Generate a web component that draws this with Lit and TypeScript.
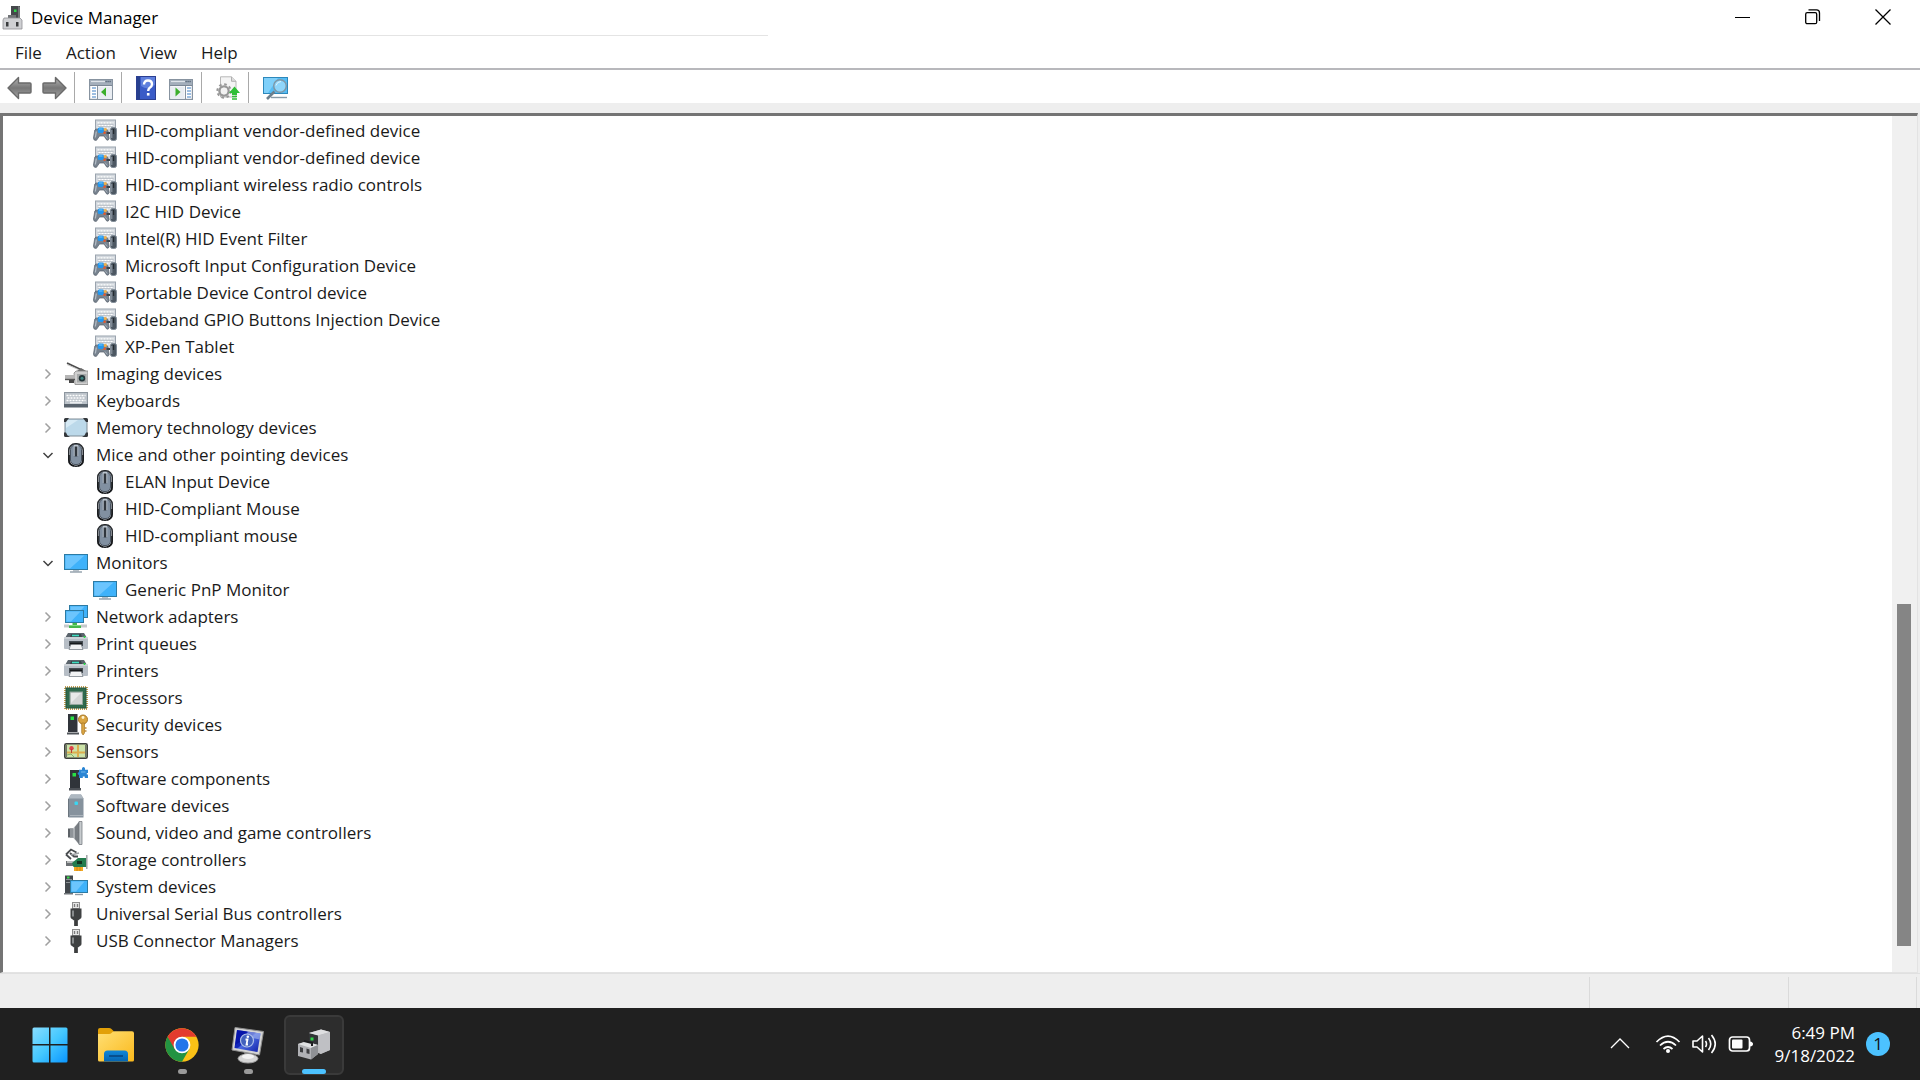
import { LitElement, html, css, svg, type TemplateResult, type SVGTemplateResult } from "lit";
import { customElement } from "lit/decorators.js";
import { classMap } from "lit/directives/class-map.js";

const icon = (body: SVGTemplateResult, size = 24): TemplateResult =>
  html`<svg class="icon" width=${size} height=${size} viewBox="0 0 24 24" aria-hidden="true">${body}</svg>`;

const screenShape = (x: number, y: number, w: number, h: number) => svg`
  <rect x=${x + 0.5} y=${y + 0.5} width=${w - 1} height=${h - 1} fill="#3fb2fa" stroke="#2c7aa3"/>
  <path d=${`M${x + 1.5} ${y + 1.5}h${w - 5}L${x + 6} ${y + h - 1.5}H${x + 1.5}z`} fill="#7ccbfd" opacity=".75"/>`;

const ICONS: Record<string, SVGTemplateResult> = {
  hid: svg`
    <rect x="2.5" y="1" width="20" height="13" fill="#d3d8de" stroke="#9aa3ad"/>
    <path d="M4.500 4h16M5.500 6.500h15M4.500 9h16" stroke="#fff" stroke-width="1.500" stroke-dasharray="2 1"/>
    <path d="M4.500 5.200h16M5 7.800h15" stroke="#a3acb6" stroke-width=".7"/>
    <path d="M1.800 11Q3 9.500 5 10h7q2.500 0 3 2l1.200 7.500q-.8 2.500-2.500 1.500L11 17H6.500L3.500 21.300Q1 22 .4 19.500z" fill="#78838f" stroke="#56606b" stroke-width=".7"/>
    <path d="M2.300 18.500l1-6" stroke="#b4bdc6" stroke-width="1.300"/><path d="M12 16.500l2.300 3" stroke="#a4adb7"/>
    <rect x="4.800" y="8.500" width="6" height="5.500" rx="1.500" fill="#2497ee"/><path d="M6 10h3.500" stroke="#74c6fa"/>
    <circle cx="12.300" cy="10.500" r="1.600" fill="#f0b04a"/><circle cx="11.600" cy="13.800" r="1.300" fill="#e2572c"/>
    <path d="M13.500 14h4.500" stroke="#3c444c" stroke-width="2"/>
    <rect x="17.500" y="8.500" width="6" height="13" rx="2" fill="#4d5863" stroke="#818c97"/>
    <path d="M20.500 10v5" stroke="#23292e" stroke-width="1.400"/><path d="M18.800 11v8" stroke="#a9b3bc" stroke-width=".8"/>`,
  imaging: svg`
    <path d="M3 1l18 8.500" stroke="#4b4b4b" stroke-width="1.800"/><path d="M3 2.500L20 10" stroke="#b8b8b8" stroke-width=".8"/>
    <path d="M13 9l4-3 5 3z" fill="#6c6c6c"/>
    <path d="M10 11l2-2h12v13.500H11z" fill="#cfcfcf" stroke="#858585" stroke-width=".8"/>
    <rect x="1" y="13" width="10" height="4.500" fill="#b6b6b6"/><path d="M1 17.500h10" stroke="#555" stroke-width="1.400"/>
    <rect x="5" y="18" width="5" height="3" fill="#484848"/>
    <rect x="13" y="12" width="9.500" height="8.500" fill="#a5a8a8"/><circle cx="18" cy="16.300" r="3.200" fill="#24363a"/><circle cx="18" cy="16.300" r="1.500" fill="#3f8580"/>`,
  keyboard: svg`
    <rect x=".5" y="3.500" width="23" height="14" fill="#bcc3ca" stroke="#8d969f"/>
    <path d="M2.500 6.500h19M3.500 9h18M2.500 11.500h19" stroke="#fff" stroke-width="1.600" stroke-dasharray="2 1"/>
    <path d="M6 13.800h12" stroke="#fff"/>
    <rect y="15" width="24" height="3.500" fill="#59636d"/>`,
  memory: svg`
    <rect x="1" y="3" width="22" height="17" rx="1.500" fill="#bcd9ea" stroke="#7e8c96"/>
    <path d="M2 12V4h12z" fill="#d6eaf5"/>
    <path d="M0 6V3.500Q0 2 1.500 2H5L3.500 4 2 6zM24 6V3.500Q24 2 22.500 2H19l1.500 2L22 6zM0 16.500V19.500Q0 21 1.500 21H6l-2.500-1.500L2 16.500zM24 16.500V19.500q0 1.500-1.500 1.500H18l2.500-1.500 1.500-3z" fill="#33373b"/>`,
  mouse: svg`
    <rect x="4.700" y=".8" width="14.600" height="22.400" rx="6.500" fill="#c6ccd3" stroke="#26292d" stroke-width="1.400"/>
    <rect x="6.500" y="2" width="11" height="19.500" rx="4.500" fill="#8190a1" stroke="#49535f"/>
    <path d="M12 2v11" stroke="#bdc7d1" stroke-width="4.500"/><path d="M12 3.500v10" stroke="#30363d" stroke-width="2.600"/>
    <path d="M5 12v5q0 5 5 6M19 12v5q0 5-5 6" fill="none" stroke="#17191c" stroke-width="1.600"/>`,
  monitor: svg`${screenShape(0, 3, 24, 16)}<path d="M9 19h6v1.500H9z" fill="#b9c2c9"/><path d="M6 21h12" stroke="#8796a3" stroke-width="1.300"/>`,
  network: svg`${screenShape(5, 0, 19, 13)}${screenShape(1, 5, 19, 13)}
    <path d="M8.500 18h4.500v2h4v3H5v-3h3.500z" fill="#46b84b"/><path d="M0 21h5M17 21h6" stroke="#c6c9cb" stroke-width="3"/><path d="M5 20.500h12" stroke="#83d986"/>`,
  printer: svg`
    <path d="M4 1h16l3 5H1z" fill="#5b646c"/><path d="M7 2h10l1 3H6z" fill="#3b454b"/><path d="M8 3.500h7" stroke="#3ddcc0" stroke-width="1.600"/>
    <rect y="5" width="24" height="12" rx="1" fill="#b7bec6"/><path d="M0 6h24" stroke="#e2e5e8"/><circle cx="20.500" cy="5" r="1" fill="#21e03e"/>
    <path d="M5 9h14v5H5z" fill="#454c52"/><path d="M7 12h10l2 5.500H5z" fill="#f2f3f4" stroke="#7c848b" stroke-width=".8"/><path d="M6 11.500h12" stroke="#16191b" stroke-width="1.800"/>`,
  processor: svg`
    <rect x="1" y="1" width="22" height="22" fill="none" stroke="#c49c50" stroke-width="2" stroke-dasharray="1 1"/>
    <rect x="2" y="2" width="20" height="20" fill="#2f6a4d" stroke="#245740"/>
    <rect x="6" y="6" width="12.500" height="12.500" fill="#d3d5d5" stroke="#92a49b"/><path d="M7 7h10L7 17z" fill="#e8e9e9"/>`,
  security: svg`
    <path d="M4 1h9.500v18H4z" fill="#30343a"/><path d="M3 19.500h12v2H3z" fill="#50545a"/><rect x="6.500" y="3.500" width="3.500" height="3.500" fill="#28e044"/>
    <circle cx="19" cy="6.500" r="4.500" fill="#d9a441" stroke="#a67625"/><circle cx="19" cy="4.500" r="1.400" fill="#fff3d0"/>
    <path d="M17.700 10h2.800v10l-1.400 2-1.400-2z" fill="#d9a441" stroke="#a67625" stroke-width=".7"/><path d="M20.500 15h2M20.500 18h2" stroke="#bd8a33" stroke-width="1.500"/>`,
  sensor: svg`
    <rect x=".8" y="3.800" width="22.400" height="14.400" rx="1.500" fill="#cce3a8" stroke="#3d3e3c" stroke-width="1.600"/>
    <path d="M3 12.500h18M14 5v12" stroke="#dbae4d" stroke-width="2"/><path d="M3 15l4-1 3 3" stroke="#83ae68" fill="none"/>
    <circle cx="7.500" cy="8.300" r="2.200" fill="#e0454b"/><path d="M7.500 9v4" stroke="#b93d37"/><path d="M2.500 5v12M21.500 5v12" stroke="#70756a"/>`,
  component: svg`
    <path d="M6 3h10v18H6z" fill="#30343a"/><path d="M5 21h12v2.500H5z" fill="#4c5056"/><rect x="8.500" y="6" width="3.500" height="3.500" fill="#28e044"/>
    <path d="M15 2.800h3V1.200q1.500-2.400 3 0v1.600h3V6h-1.200v1.500H24V11h-3.200V9.500h-2V11H15V8q-2.800-1.500 0-3z" fill="#2a85d4"/><path d="M17 5h4.500" stroke="#72b8ec"/>`,
  software: svg`
    <path d="M7 .5h10L19.500 4.500V23.500H4.500V4.500z" fill="#86929d"/><path d="M7 .5h10l2.500 4h-15z" fill="#aeb8c1"/><path d="M4.500 5v18" stroke="#6b757e"/>
    <rect x="10.500" y="7.500" width="3.500" height="3.500" rx="1" fill="#3bd6f2"/><path d="M6 21.500h13" stroke="#aab3bb"/>`,
  sound: svg`
    <path d="M4 7.500h5v9H4z" fill="#5d6267"/><path d="M6 7.500h3v9H6z" fill="#8f9499"/>
    <path d="M9 7.500L15 .8v22.400L9 16.500z" fill="#a9adb1"/><path d="M11 6L15 1v22l-4-5z" fill="#787d82"/><path d="M15 .5h3v23h-3z" fill="#c7cbce" stroke="#6b7075" stroke-width=".7"/>`,
  storage: svg`
    <path d="M2 6.500L7 1.500l5.500 3M2 6.500l5 4.500M6 5l4 3.500h4" fill="none" stroke="#4a4d50" stroke-width="1.800"/><path d="M7 7l8-2" stroke="#9da1a4" stroke-width="1.500"/>
    <path d="M2 13h9l3 5H2z" fill="#6b6f72"/><path d="M3 14h8" stroke="#d2d4d5" stroke-width="1.500"/>
    <path d="M8 15l6-5h8.500v9H9.500z" fill="#237c4e"/><path d="M13 14.500h5" stroke="#12331f" stroke-width="3"/><path d="M22.800 7v14" stroke="#a2a5a7" stroke-width="1.500"/>
    <rect x="10" y="19" width="9" height="4" fill="#f1a922"/><path d="M13 19v4M16 19v4" stroke="#d17a12" stroke-width=".8"/>`,
  system: svg`
    <path d="M1 .5h8V18H1z" fill="#42474c"/><path d="M0 18h9v1.500H0z" fill="#707579"/><path d="M2 4.500h6M2 7.500h6" stroke="#8c9195"/><rect x="3" y="1.500" width="2.500" height="2" fill="#38dc4c"/>
    ${screenShape(6, 5, 18, 13)}<path d="M11 19.500h8" stroke="#8e9aa3" stroke-width="1.400"/>`,
  usb: svg`
    <rect x="8.500" y=".5" width="7" height="6" fill="#e6e6e6" stroke="#8f8f8f"/><path d="M10.500 2v3M13.500 2v3" stroke="#7c7c7c" stroke-width="1.300"/>
    <path d="M6.500 6.500h11v8.500q0 1.500-1.500 2l-2 1.500h-4l-2-1.500q-1.500-.5-1.500-2z" fill="#3f4142"/><path d="M9 8.500v6" stroke="#888b8d" stroke-width="2"/>
    <path d="M10 18h4v6h-4z" fill="#545657"/><path d="M12 18v6" stroke="#242525"/>`,
};

interface Node { label: string; icon: string; children?: Node[]; }

const child = (iconName: string, ...labels: string[]): Node[] => labels.map((label) => ({ label, icon: iconName }));

const HID_DEVICES = child("hid",
  "HID-compliant vendor-defined device", "HID-compliant vendor-defined device", "HID-compliant wireless radio controls",
  "I2C HID Device", "Intel(R) HID Event Filter", "Microsoft Input Configuration Device",
  "Portable Device Control device", "Sideband GPIO Buttons Injection Device", "XP-Pen Tablet");

const CATEGORIES: Node[] = [
  { label: "Imaging devices", icon: "imaging" },
  { label: "Keyboards", icon: "keyboard" },
  { label: "Memory technology devices", icon: "memory" },
  { label: "Mice and other pointing devices", icon: "mouse", children: child("mouse", "ELAN Input Device", "HID-Compliant Mouse", "HID-compliant mouse") },
  { label: "Monitors", icon: "monitor", children: child("monitor", "Generic PnP Monitor") },
  { label: "Network adapters", icon: "network" },
  { label: "Print queues", icon: "printer" },
  { label: "Printers", icon: "printer" },
  { label: "Processors", icon: "processor" },
  { label: "Security devices", icon: "security" },
  { label: "Sensors", icon: "sensor" },
  { label: "Software components", icon: "component" },
  { label: "Software devices", icon: "software" },
  { label: "Sound, video and game controllers", icon: "sound" },
  { label: "Storage controllers", icon: "storage" },
  { label: "System devices", icon: "system" },
  { label: "Universal Serial Bus controllers", icon: "usb" },
  { label: "USB Connector Managers", icon: "usb" },
];

const chevron = (open: boolean) => html`<svg class="chevron" width="12" height="12" viewBox="0 0 12 12" aria-hidden="true">
  <path d=${open ? "M1.500 4L6 8.500 10.500 4" : "M3.500 1.500L8 6 3.500 10.500"} fill="none" stroke=${open ? "#404040" : "#a0a0a0"} stroke-width="1.500"/></svg>`;

const arrow = (left: boolean) => html`<svg width="26" height="24" viewBox="0 0 26 24" aria-hidden="true">
  <defs><linearGradient id="g" x2="0" y2="1"><stop stop-color="#b4b4b4"/><stop offset=".5" stop-color="#777"/><stop offset="1" stop-color="#a5a5a5"/></linearGradient></defs>
  <path d=${left ? "M1 12L11.500 1.500V7H23q1 0 1 1v8q0 1-1 1H11.500v5.500z" : "M24 12L13.500 1.500V7H2q-1 0-1 1v8q0 1 1 1h11.500v5.500z"} fill="url(#g)" stroke="#6a6a6a" stroke-width="1.400" stroke-linejoin="round"/></svg>`;

const pane = (left: boolean) => svg`
  <rect x=".6" y="3.600" width="22.800" height="19.800" fill="#fff" stroke="#8793a0" stroke-width="1.200"/>
  <rect x="1" y="4" width="22" height="5" fill="#a3aebb"/><path d="M2 5.500h14" stroke="#dfe4ea" stroke-width="1.200"/><path d="M16.500 5.500h5.500" stroke="#4d5c6e" stroke-width="1.400" stroke-dasharray="1.200 .8"/>
  <path d="M1 9.500h22" stroke="#7c8896"/>
  ${left
    ? svg`<path d="M3 12h4M3 15h4M3 18h4M3 21h4" stroke="#3d7fc4" stroke-width="1.200"/><path d="M8.500 10v13" stroke="#8793a0"/><rect x="9" y="10.500" width="14" height="12.500" fill="#e9edf2"/><path d="M17 11.500v9l-5-4.500z" fill="#3bae2c"/>`
    : svg`<path d="M18 12h4M18 15h4M18 18h4M18 21h4" stroke="#3d7fc4" stroke-width="1.200"/><path d="M16.500 10v13" stroke="#8793a0"/><rect x="1.500" y="10.500" width="14" height="12.500" fill="#e9edf2"/><path d="M6.500 11.500v9l5-4.500z" fill="#3bae2c"/>`}`;

const helpIcon = html`<svg width="20" height="24" viewBox="0 0 20 24" aria-hidden="true">
  <rect x=".5" y=".5" width="19" height="23" fill="#3a5bc7" stroke="#2b3f92"/><path d="M1 1h3v22H1z" fill="#27408f"/><path d="M5 1h14v8Q12 15 5 10z" fill="#5f80dd"/>
  <path d="M8 8.500Q8 4.500 12 4.500t4 3.700Q16 10.500 13.500 12 12.200 13 12.200 15" fill="none" stroke="#fff" stroke-width="2.400"/><rect x="10.900" y="17" width="2.600" height="2.600" fill="#fff"/></svg>`;

const scanIcon = svg`
  <path d="M4.500.8h11l4.500 4.500V21H4.500z" fill="#f4f4f4" stroke="#b8b8b8"/><path d="M15.500.8v4.500H20" fill="#ddd" stroke="#b0b0b0"/>
  <circle cx="8" cy="15" r="4.600" fill="none" stroke="#979797" stroke-width="2.400"/><circle cx="8" cy="15" r="6.700" fill="none" stroke="#979797" stroke-width="2" stroke-dasharray="2.600 2.660"/><circle cx="8" cy="15" r="3.300" fill="#f2f2f2"/>
  <path d="M18.500 10.500l5.500 6.500h-3v2h-5v-2h-3z" fill="#2fbf36"/><path d="M16 20.500h5M16 23h5" stroke="#2fbf36" stroke-width="1.400"/>`;

const searchScreen = html`<svg width="26" height="24" viewBox="0 0 26 24" aria-hidden="true">
  <rect x=".5" y="1.500" width="24" height="16" fill="#56bdf5" stroke="#2d88bb"/><path d="M1 2h14L5 17H1z" fill="#7fd0fa"/>
  <path d="M8 21.500h16" stroke="#879aa7" stroke-width="1.400"/><path d="M4 23l7.500-7.500" stroke="#6e7f8c" stroke-width="2.600"/>
  <circle cx="17" cy="10" r="6.300" fill="#8fd5fa" stroke="#7e98a8" stroke-width="1.500"/><path d="M13 9.500q1-4 5-4" fill="none" stroke="#dff4ff"/></svg>`;

const appIcon = html`<svg width="22" height="26" viewBox="0 0 22 26" aria-hidden="true">
  <path d="M9 1h9v14H9z" fill="#45484b"/><path d="M16 1l2 1v13h-2z" fill="#737779"/><rect x="12" y="4.500" width="2.500" height="2.500" fill="#2ed64a"/>
  <path d="M6 10h8v4H6z" fill="#717477"/><path d="M2 13h16l2 2v9H1v-9z" fill="#cfd0d3" stroke="#8f9194" stroke-width=".8"/>
  <path d="M4 17h2.500v4.500H4zM14 17h2.500v4.500H14z" fill="#3b3c3e"/></svg>`;

const startLogo = html`<svg width="36" height="36" viewBox="0 0 36 36" aria-hidden="true">
  <defs><linearGradient id="win" gradientUnits="userSpaceOnUse" x1="0" y1="0" x2="36" y2="36"><stop stop-color="#8adeff"/><stop offset=".5" stop-color="#45c8ff"/><stop offset="1" stop-color="#0894ff"/></linearGradient></defs>
  <path d="M2 .5h15v16.500H.5V2q0-1.500 1.500-1.500zM18.500.5H34q1.500 0 1.500 1.500v15h-17zM.5 18.500H17v17H2Q.5 35.500.5 34zM18.500 18.500h17V34q0 1.500-1.500 1.500H18.500z" fill="url(#win)"/></svg>`;

const folderLogo = html`<svg width="38" height="36" viewBox="0 0 38 36" aria-hidden="true">
  <defs><linearGradient id="f" x2="1" y2="1"><stop stop-color="#ffdf74"/><stop offset="1" stop-color="#fbb91c"/></linearGradient><linearGradient id="b" x2="0" y2="1"><stop stop-color="#1187d8"/><stop offset="1" stop-color="#0565b2"/></linearGradient></defs>
  <path d="M1 3q0-2 2-2h9q1.500 0 2.500 1L17 4.500V10H1z" fill="#e2a008"/>
  <path d="M1 7h11q1.500 0 2.500-1l1-1q1-.8 2-.8H35q2 0 2 2V33q0 1.500-1.500 1.500H2.500Q1 34.500 1 33z" fill="url(#f)"/>
  <path d="M7 34.500V27q0-3.500 3.500-3.500h17Q31 23.500 31 27v7.500z" fill="url(#b)"/><path d="M12 29h14" stroke="#063f78" stroke-width="1.400"/></svg>`;

const chromeLogo = html`<svg width="34" height="34" viewBox="0 0 48 48" aria-hidden="true">
  <circle cx="24" cy="24" r="23.500" fill="#fbc116"/>
  <path d="M3.650 12.250A23.500 23.500 0 0 0 24 47.500L34.200 29.900 24 24H13.800z" fill="#229342"/>
  <path d="M3.650 12.250L13.800 29.900 24 24V12.250H44.350A23.500 23.500 0 0 0 3.650 12.250z" fill="#e33b2e"/>
  <circle cx="24" cy="24" r="11.800" fill="#fff"/><circle cx="24" cy="24" r="9.300" fill="#2476ea"/></svg>`;

const infoLogo = html`<svg width="34" height="38" viewBox="0 0 34 38" aria-hidden="true">
  <defs><linearGradient id="s" x2="1" y2="1"><stop stop-color="#0b1cc0"/><stop offset=".45" stop-color="#1226b8"/><stop offset=".5" stop-color="#4b6ae0"/><stop offset="1" stop-color="#0f1ea6"/></linearGradient></defs>
  <path d="M13 24l9 2-1 7h-7z" fill="#8c8c8c"/><ellipse cx="17" cy="32.500" rx="10" ry="4.500" fill="#d5d5d5" stroke="#9a9a9a"/><ellipse cx="17" cy="30.500" rx="6" ry="2.500" fill="#f2f2f2"/>
  <path d="M4 1.500l28.500 4L28.500 29 1 24z" fill="#d4d4d4" stroke="#8d8d8d"/>
  <path d="M6 4l23.500 3.400L26.500 26 3.500 22z" fill="url(#s)"/><path d="M17 5.500l12.500 1.900-1 6-14-3z" fill="#a9b9ee" opacity=".6"/><path d="M6 4l10 1.500L9 16l-5 3z" fill="#000c9c" opacity=".6"/>
  <circle cx="16" cy="14.500" r="6.500" fill="#4261bd" stroke="#aebfe8" stroke-width="1.200"/>
  <circle cx="16.800" cy="10.800" r="1.300" fill="#fff"/><path d="M14.500 13.500h2l-1 5h1.500" fill="none" stroke="#fff" stroke-width="1.800"/></svg>`;

const deviceLogo = html`<svg width="36" height="34" viewBox="0 0 36 34" aria-hidden="true">
  <path d="M13 5l12-3.500L34 4v18l-9 4-12-4z" fill="#b9babd"/><path d="M13 5l9 2v18l-9-4z" fill="#323437"/><path d="M13 5l12-3.500L34 4 22 7.500z" fill="#dedfe1"/>
  <path d="M22 7.500L34 4v18l-10 4z" fill="#bfc0c4"/><rect x="14.500" y="9.500" width="3" height="3" fill="#30d64a"/>
  <path d="M2 16l8-2.500L22 17v9l-7 5.500L2 28z" fill="#b0b1b5"/><path d="M2 16l8-2.500L22 17l-7 3z" fill="#dfe0e2"/><path d="M15 20l7-3v9l-7 5.500z" fill="#8f9195"/>
  <path d="M8 13l8 2v3" fill="none" stroke="#1b1c1e" stroke-width="2"/><path d="M4 19l3 1v4.500L4 24zM10.500 20.500l3 1V26l-3-.8z" fill="#3c3d40"/></svg>`;

@customElement("app-root")
export class AppRoot extends LitElement {
  static styles = css`
    :host { display: flex; flex-direction: column; min-height: 100vh; background: #fff; color: #1a1a1a; font: 17px/26px "Open Sans", "Noto Sans", sans-serif; }
    * { box-sizing: border-box; }
    button { border: 0; padding: 0; margin: 0; background: none; color: inherit; font: inherit; display: flex; align-items: center; justify-content: center; }
    svg { display: block; flex: none; }
    ul { list-style: none; margin: 0; padding: 0; }
    .titlebar { display: flex; height: 35px; align-items: center; justify-content: space-between; }
    .caption { display: flex; align-items: center; gap: 7px; padding-left: 2px; color: #000; }
    .caption h1 { font: inherit; margin: 0; padding-top: 1px; }
    .window-buttons { display: flex; height: 35px; padding: 0 2px 2px 0; }
    .window-buttons button { width: 70px; }
    .edge { width: 40%; height: 1px; background: #e4e4e4; }
    .menubar { display: flex; height: 32px; align-items: center; padding: 2px 0 0 15px; gap: 24px; }
    .toolbar { display: flex; height: 35px; align-items: flex-end; border-top: 2px solid #b8b8bc; padding-left: 7px; }
    .group { display: flex; height: 31px; align-items: center; gap: 13px; padding: 0 8px 0 14px; border-left: 1px solid #a9a9a9; }
    .group:first-child { border: 0; padding: 0 6px 0 0; gap: 9px; }
    .content { flex: 1; display: flex; flex-direction: column; background: #eee; padding: 10px 2px 0 0; }
    .view { flex: 1; display: flex; border: solid #e3e3e3; border-width: 3px 1px 1px 3px; border-top-color: #747474; border-left-color: #747474; background: #fff; }
    .tree { flex: 1; padding-top: 1px; }
    .item { display: flex; height: 27px; align-items: center; padding-left: 39px; gap: 5px; white-space: nowrap; }
    .item .icon { margin-left: 5px; }
    .item.leaf { padding-left: 85px; }
    .twisty { width: 12px; height: 27px; }
    .item .icon + span { margin-left: 3px; }
    .scrollbar { width: 25px; background: #f0f0f0; padding: 488px 6px 26px 5px; display: flex; }
    .thumb { flex: 1; background: #858585; }
    .status { display: flex; height: 35px; background: #eee; border-top: 1px solid #e0e0e0; padding-top: 3px; }
    .status span { border-right: 1px solid #dadada; }
    .status .main { flex: 1; } .status .mid { width: 199px; } .status .end { width: 128px; margin-right: 3px; }
    .taskbar { display: flex; height: 72px; align-items: center; justify-content: space-between; background: #202020; color: #fff; padding: 0 30px 0 20px; }
    .apps { display: flex; gap: 6px; margin-top: 2px; }
    .apps button { position: relative; width: 60px; height: 60px; border-radius: 6px; }
    .apps .active { background: #2d2d2d; border: 2px solid #3a3a3a; }
    .mark { position: absolute; bottom: 1px; width: 9px; height: 5px; border-radius: 3px; background: #9a9a9a; }
    .active .mark { width: 24px; background: #4cc2ff; bottom: -1px; }
    .tray { display: flex; align-items: center; }
    .tray .up { margin-right: 25px; }
    .tray .quick { gap: 11px; margin-right: 21px; }
    .clock { display: block; text-align: right; line-height: 23px; margin-right: 11px; }
    .clock time { display: block; }
    .badge { width: 24px; height: 24px; border-radius: 50%; background: #4cc2ff; color: #111; line-height: 24px; }
  `;

  private row(node: Node, leaf: boolean): TemplateResult {
    const open = !!node.children;
    return html`<li role="treeitem" aria-label=${node.label}>
      <div class=${classMap({ item: true, leaf })}>
        ${leaf ? "" : html`<button class="twisty" aria-label=${`${open ? "Collapse" : "Expand"} ${node.label}`}>${chevron(open)}</button>`}
        ${icon(ICONS[node.icon])}<span>${node.label}</span>
      </div>
      ${open ? html`<ul role="group">${node.children!.map((n) => this.row(n, true))}</ul>` : ""}
    </li>`;
  }

  render() {
    return html`
      <header class="titlebar">
        <div class="caption">${appIcon}<h1>Device Manager</h1></div>
        <div class="window-buttons">
          <button aria-label="Minimize"><svg width="16" height="16"><path d="M0 8.500h15" stroke="#000"/></svg></button>
          <button aria-label="Restore"><svg width="16" height="16" fill="none" stroke="#000" stroke-width="1.300"><rect x=".7" y="3.700" width="11" height="11" rx="1.500"/><path d="M3.500.9h8q3 0 3 3v8"/></svg></button>
          <button aria-label="Close"><svg width="16" height="16"><path d="M.5.5l15 15M15.500.5l-15 15" stroke="#000" stroke-width="1.300"/></svg></button>
        </div>
      </header>
      <div class="edge"></div>
      <nav class="menubar" aria-label="Menu">
        ${["File", "Action", "View", "Help"].map((m) => html`<button>${m}</button>`)}
      </nav>
      <div class="toolbar" role="toolbar">
        <div class="group"><button aria-label="Back">${arrow(true)}</button><button aria-label="Forward">${arrow(false)}</button></div>
        <div class="group"><button aria-label="Show or hide console tree">${icon(pane(true))}</button></div>
        <div class="group"><button aria-label="Help topics">${helpIcon}</button><button aria-label="Action pane">${icon(pane(false))}</button></div>
        <div class="group"><button aria-label="Update driver">${icon(scanIcon)}</button></div>
        <div class="group"><button aria-label="Scan for hardware changes">${searchScreen}</button></div>
      </div>
      <main class="content">
        <div class="view">
          <ul class="tree" role="tree">
            ${HID_DEVICES.map((n) => this.row(n, true))}
            ${CATEGORIES.map((n) => this.row(n, false))}
          </ul>
          <div class="scrollbar"><div class="thumb"></div></div>
        </div>
      </main>
      <footer class="status"><span class="main"></span><span class="mid"></span><span class="end"></span></footer>
      <footer class="taskbar">
        <div class="apps">
          <button aria-label="Start">${startLogo}</button>
          <button aria-label="File Explorer">${folderLogo}</button>
          <button aria-label="Chrome">${chromeLogo}<span class="mark"></span></button>
          <button aria-label="System Information">${infoLogo}<span class="mark"></span></button>
          <button class="active" aria-label="Device Manager">${deviceLogo}<span class="mark"></span></button>
        </div>
        <div class="tray">
          <button class="up" aria-label="Show hidden icons"><svg width="20" height="20" fill="none" stroke="#fff" stroke-width="1.300"><path d="M1 14l9-9 9 9"/></svg></button>
          <button class="quick" aria-label="Quick settings">
            <svg width="26" height="20" viewBox="0 0 26 20" fill="none" stroke="#fff" stroke-width="1.700"><path d="M1.500 8Q13-3.500 24.500 8M5 11.500q8-7.500 16 0M8.500 15q4.500-4 9 0"/><circle cx="13" cy="17" r="2" fill="#fff" stroke="none"/></svg>
            <svg width="25" height="20" viewBox="0 0 25 20" fill="none" stroke="#fff" stroke-width="1.600" stroke-linejoin="round"><path d="M1 7h4l5.500-5v16L5 13H1zM13.500 7q2 3 0 6M16.500 4q4.500 6 0 12M19.500 1q7.500 9 0 18"/></svg>
            <svg width="25" height="20" viewBox="0 0 25 20"><rect x="1.500" y="3" width="20" height="14" rx="3" fill="none" stroke="#fff" stroke-width="1.700"/><rect x="4" y="5.500" width="10.500" height="9" rx="1" fill="#fff"/><path d="M22 7.500q3 .5 3 2.500t-3 2.500z" fill="#fff"/></svg>
          </button>
          <button class="clock"><time>6:49 PM</time><time>9/18/2022</time></button>
          <button class="badge" aria-label="1 notification">1</button>
        </div>
      </footer>`;
  }
}
